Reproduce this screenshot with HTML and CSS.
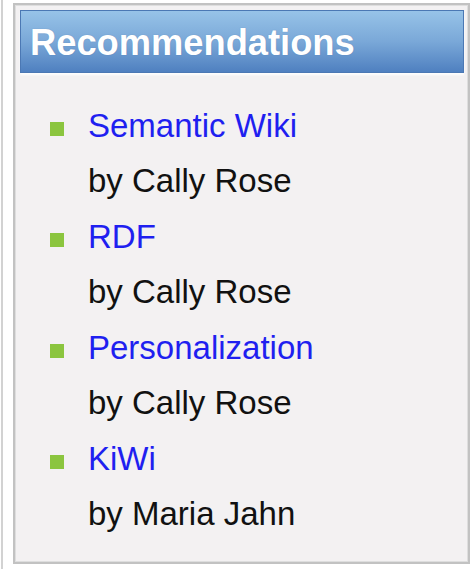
FILE: index.html
```html
<!DOCTYPE html>
<html>
<head>
<meta charset="utf-8">
<link rel="stylesheet" href="styles.css">
</head>
<body>
<div class="page">
  <div class="edge"></div>
  <div class="panel">
    <div class="header">Recommendations</div>
    <ul class="list">
      <li class="item">
        <div class="line"><span class="mark"></span><a class="link" href="#">Semantic Wiki</a></div>
        <div class="by">by Cally Rose</div>
      </li>
      <li class="item">
        <div class="line"><span class="mark"></span><a class="link" href="#">RDF</a></div>
        <div class="by">by Cally Rose</div>
      </li>
      <li class="item">
        <div class="line"><span class="mark"></span><a class="link" href="#">Personalization</a></div>
        <div class="by">by Cally Rose</div>
      </li>
      <li class="item">
        <div class="line"><span class="mark"></span><a class="link" href="#">KiWi</a></div>
        <div class="by">by Maria Jahn</div>
      </li>
    </ul>
  </div>
</div>
</body>
</html>
```
FILE: styles.css
```css
html, body {
  margin: 0;
  padding: 0;
  background: #ffffff;
}
body {
  font-family: "Liberation Sans", Arial, sans-serif;
  width: 474px;
  height: 569px;
  overflow: hidden;
}
.page {
  display: flex;
  padding-top: 3px;
}
.edge {
  width: 2px;
  height: 569px;
  margin-top: -3px;
  margin-left: 1px;
  margin-right: 10px;
  background: #d2d2d2;
}
.panel {
  box-sizing: border-box;
  width: 457px;
  height: 561px;
  border: 2px solid #c2c2c2;
  box-shadow: inset 0 0 0 1px #dedede;
  background: #f3f1f2;
  padding: 5px 4px 4px 5px;
}
.header {
  box-sizing: border-box;
  height: 63px;
  border: 1px solid #4b78b4;
  background: linear-gradient(to bottom, #97c3e8 0%, #7aa8d8 50%, #4f80c0 100%);
  color: #ffffff;
  font-weight: bold;
  font-size: 36.3px;
  line-height: 58px;
  padding: 3px 0 0 9px;
  text-shadow: 0 0 1px rgba(40, 70, 120, 0.35);
  box-shadow: 0 2px 2px rgba(255, 255, 255, 0.9);
}
.list {
  list-style: none;
  margin: 28px 0 0 0;
  padding: 0;
}
.item {
  margin-bottom: 2px;
}
.line {
  display: flex;
  align-items: center;
  height: 50px;
}
.mark {
  width: 14px;
  height: 14px;
  background: #8bc53f;
  margin-left: 30px;
  margin-right: 24px;
  margin-top: 5px;
}
.link {
  font-size: 33px;
  line-height: 50px;
  color: #1f1ff0;
  text-decoration: none;
}
.by {
  font-size: 33px;
  line-height: 59px;
  color: #111111;
  padding-left: 68px;
}
```
